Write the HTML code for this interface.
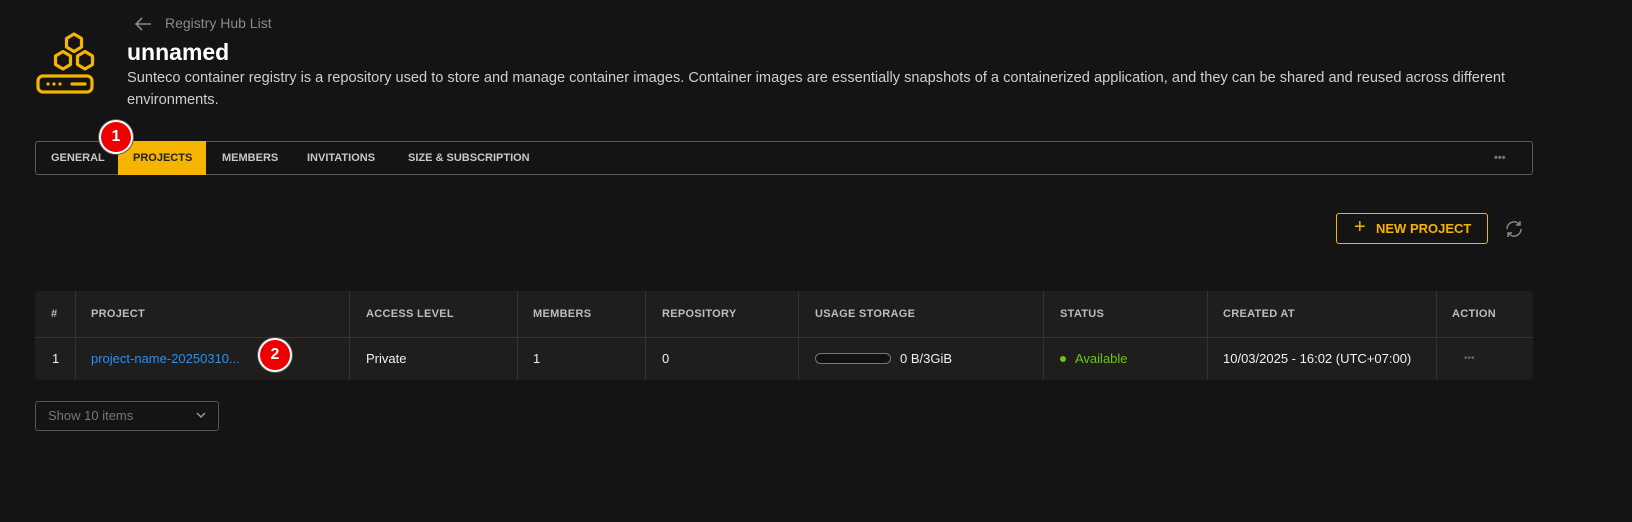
<!DOCTYPE html><html><head><style>
body{margin:0;width:1632px;height:522px;background:#141414;font-family:"Liberation Sans",sans-serif;color:#ddd;position:relative;overflow:hidden}
.a{position:absolute}
.tab{position:absolute;top:142px;height:32px;line-height:32px;font-size:11px;font-weight:bold;color:#c8c8c8}
.th{position:absolute;top:291px;height:46px;line-height:46px;font-size:11px;font-weight:bold;color:#bdbdbd;letter-spacing:.3px}
.td{position:absolute;top:337px;height:43px;line-height:43px;font-size:13px;color:#f0f0f0}
.vl{position:absolute;top:291px;height:89px;width:1px;background:#333}
.badge{position:absolute;width:30px;height:30px;border-radius:50%;background:#e00;color:#fff;font-weight:bold;font-size:16px;text-align:center;line-height:30px;box-shadow:0 0 0 2px #fff,0 0 0 3px #555}
</style></head><body>
<svg class="a" style="left:134px;top:16px" width="18" height="16" viewBox="0 0 18 16"><path d="M17 8H2M8 2L2 8l6 6" stroke="#888" stroke-width="1.6" fill="none"/></svg>
<div class="a" style="left:165px;top:15px;font-size:14px;color:#8a8a8a">Registry Hub List</div>
<svg class="a" style="left:36px;top:32px" width="60" height="62" viewBox="0 0 60 62" fill="none" stroke="#f5b400" stroke-width="3.2" stroke-linejoin="round">
<polygon points="38,2 45.5,6.5 45.5,15 38,19.5 30.5,15 30.5,6.5"/><polygon points="27,19.5 34.5,24 34.5,32.5 27,37 19.5,32.5 19.5,24"/><polygon points="49,19.5 56.5,24 56.5,32.5 49,37 41.5,32.5 41.5,24"/>
<rect x="2" y="44" width="54" height="16" rx="5"/><path d="M36 52H49" stroke-linecap="round"/>
<circle cx="12" cy="52" r="1.6" fill="#f5b400" stroke="none"/><circle cx="18" cy="52" r="1.6" fill="#f5b400" stroke="none"/><circle cx="24" cy="52" r="1.6" fill="#f5b400" stroke="none"/></svg>
<div class="a" style="left:127px;top:39px;font-size:23px;font-weight:bold;color:#fff">unnamed</div>
<div class="a" style="left:127px;top:67px;width:1425px;font-size:14.6px;line-height:22px;color:#cfcfcf">Sunteco container registry is a repository used to store and manage container images. Container images are essentially snapshots of a containerized application, and they can be shared and reused across different environments.</div>
<div class="a" style="left:35px;top:141px;width:1496px;height:32px;border:1px solid #5a5a5a;border-radius:3px"></div>
<div class="a" style="left:118px;top:141px;width:88px;height:34px;background:#f5b400"></div>
<div class="tab" style="left:51px">GENERAL</div>
<div class="tab" style="left:133px;color:#222">PROJECTS</div>
<div class="tab" style="left:222px">MEMBERS</div>
<div class="tab" style="left:307px">INVITATIONS</div>
<div class="tab" style="left:408px">SIZE &amp; SUBSCRIPTION</div>
<div class="tab" style="left:1494px;color:#777">•••</div>
<div class="badge" style="left:101px;top:122px">1</div>
<div class="a" style="left:1336px;top:213px;width:150px;height:29px;border:1px solid #f5b400;border-radius:3px;color:#f5b400;font-size:13px;font-weight:bold;line-height:29px"><span style="font-size:20px;font-weight:normal;position:absolute;left:17px;top:-1px">+</span><span style="position:absolute;left:39px">NEW PROJECT</span></div>
<svg class="a" style="left:1504px;top:219px" width="20" height="20" viewBox="0 0 20 20" fill="none" stroke="#888" stroke-width="1.5"><path d="M3 10a7 7 0 0 1 12-5l1 1M17 10a7 7 0 0 1-12 5l-1-1M16 2v4h-4M4 18v-4h4"/></svg>
<div class="a" style="left:35px;top:291px;width:1498px;height:89px;background:#1f1e1d;border-radius:5px"></div>
<div class="a" style="left:35px;top:337px;width:1498px;height:1px;background:#333"></div>
<div class="vl" style="left:75px"></div><div class="vl" style="left:349px"></div><div class="vl" style="left:517px"></div><div class="vl" style="left:645px"></div><div class="vl" style="left:798px"></div><div class="vl" style="left:1043px"></div><div class="vl" style="left:1207px"></div><div class="vl" style="left:1436px"></div>
<div class="th" style="left:51px">#</div><div class="th" style="left:91px">PROJECT</div><div class="th" style="left:366px">ACCESS LEVEL</div><div class="th" style="left:533px">MEMBERS</div><div class="th" style="left:662px">REPOSITORY</div><div class="th" style="left:815px">USAGE STORAGE</div><div class="th" style="left:1060px">STATUS</div><div class="th" style="left:1223px">CREATED AT</div><div class="th" style="left:1452px">ACTION</div>
<div class="td" style="left:52px">1</div>
<div class="td" style="left:91px;color:#2b8fef">project-name-20250310...</div>
<div class="td" style="left:366px">Private</div><div class="td" style="left:533px">1</div><div class="td" style="left:662px">0</div>
<div class="a" style="left:815px;top:353px;width:74px;height:9px;border:1px solid #777;border-radius:6px;background:#111"></div>
<div class="td" style="left:900px">0 B/3GiB</div>
<div class="a" style="left:1060px;top:356px;width:6px;height:6px;border-radius:50%;background:#6cc414"></div>
<div class="td" style="left:1075px;color:#6cc414">Available</div>
<div class="td" style="left:1223px">10/03/2025 - 16:02 (UTC+07:00)</div>
<div class="td" style="left:1464px;color:#666;font-size:10px">•••</div>
<div class="badge" style="left:260px;top:340px">2</div>
<div class="a" style="left:35px;top:401px;width:182px;height:28px;border:1px solid #555;border-radius:3px;font-size:13px;line-height:28px;color:#777"><span style="margin-left:12px">Show 10 items</span>
<svg class="a" style="left:160px;top:10px" width="10" height="7" viewBox="0 0 10 7"><path d="M1 1l4 4 4-4" stroke="#999" stroke-width="1.4" fill="none"/></svg></div>
</body></html>
